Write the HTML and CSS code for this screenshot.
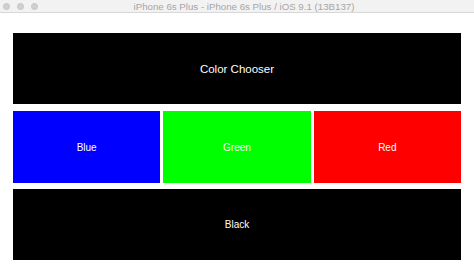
FILE: index.html
```html
<!DOCTYPE html>
<html>
<head>
<meta charset="utf-8">
<link rel="stylesheet" href="styles.css">
</head>
<body>
<div class="window">
  <div class="titlebar">
    <div class="lights"><span class="light"></span><span class="light"></span><span class="light"></span></div>
    <div class="title">iPhone 6s Plus - iPhone 6s Plus / iOS 9.1 (13B137)</div>
  </div>
  <div class="content">
    <div class="box black big">Color Chooser</div>
    <div class="row">
      <div class="box blue">Blue</div>
      <div class="box green">Green</div>
      <div class="box red">Red</div>
    </div>
    <div class="box black">Black</div>
  </div>
</div>
</body>
</html>
```

FILE: styles.css
```css
html, body { margin: 0; padding: 0; background: #fff; }
body { width: 474px; height: 280px; overflow: hidden; font-family: "Liberation Sans", Arial, sans-serif; }
.titlebar {
  position: relative;
  height: 12px;
  background: #f2f2f2;
  border-bottom: 1px solid #d8d8d8;
  display: flex;
  align-items: center;
  justify-content: center;
}
.lights { position: absolute; left: 3px; top: 2.5px; display: flex; gap: 7px; }
.light { width: 7px; height: 7px; border-radius: 50%; background: #d0d0d0; border: 0.5px solid #c4c4c4; box-sizing: border-box; }
.title { font-size: 9.7px; color: #a6a6a6; margin-left: 14px; }
.content {
  padding: 20px 13px 0 13px;
  display: flex;
  flex-direction: column;
  gap: 6px;
}
.box {
  display: flex;
  align-items: center;
  justify-content: center;
  color: #fff;
  font-size: 10px;
  height: 71px;
}
.big { font-size: 11.5px; margin-bottom: 1px; }
.black { background: #000; }
.row { display: flex; gap: 3px; height: 72px; }
.row .box { flex: 1; height: 72px; }
.blue { background: #0000ff; }
.green { background: #00ff00; }
.red { background: #ff0000; }
```
